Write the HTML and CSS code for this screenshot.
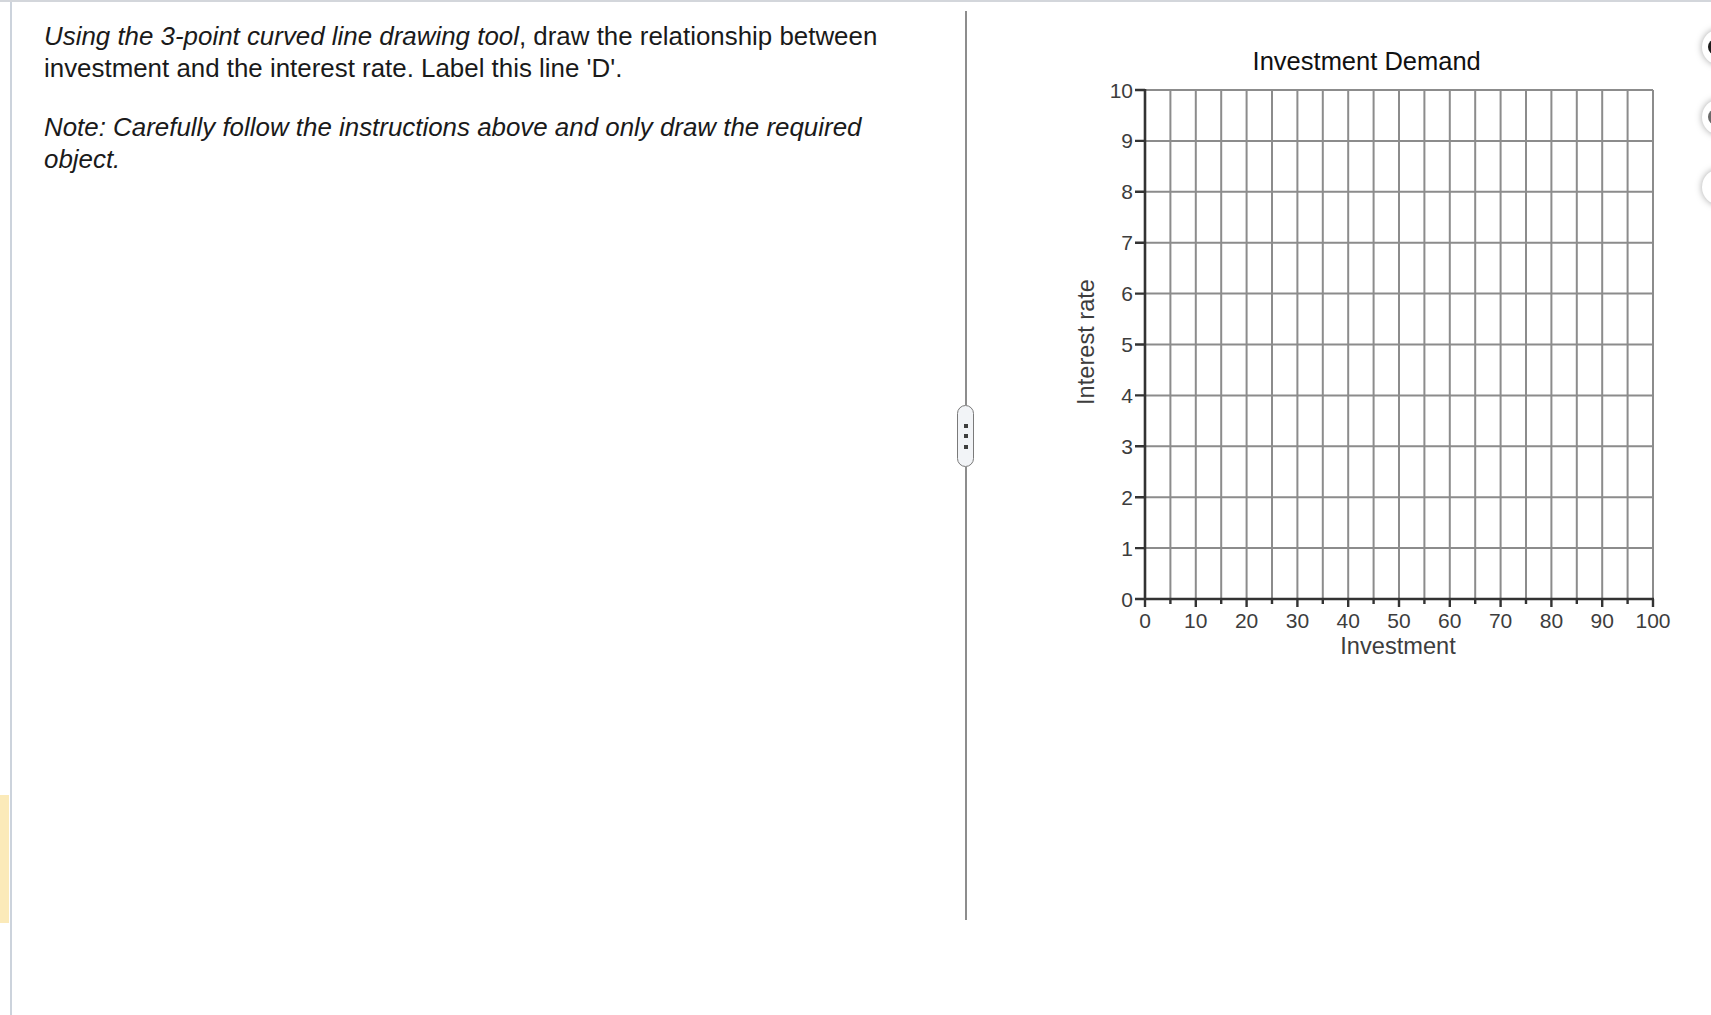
FILE: index.html
```html
<!DOCTYPE html>
<html lang="en">
<head>
<meta charset="utf-8">
<title>Investment Demand</title>
<link rel="stylesheet" href="styles.css">
</head>
<body>
<div class="page">
  <div class="gutter"><div class="mark"></div></div>
  <div class="frame">
    <section class="question">
      <p><span class="line"><em>Using the 3-point curved line drawing tool</em>, draw the relationship between</span><br><span class="line">investment and the interest rate. Label this line 'D'.</span></p>
      <p><em>Note: Carefully follow the instructions above and only draw the required object.</em></p>
    </section>
    <div class="splitter">
      <div class="split-line top"></div>
      <div class="handle"><span class="dot"></span><span class="dot"></span><span class="dot"></span></div>
      <div class="split-line bottom"></div>
    </div>
    <section class="graph">
      <svg class="chart" width="737" height="700" viewBox="974 2 737 700" xmlns="http://www.w3.org/2000/svg">
        <text class="title" x="1366.7" y="69.5" text-anchor="middle">Investment Demand</text>
        <path class="grid" d="M1170.4 90V599M1195.8 90V599M1221.2 90V599M1246.6 90V599M1272 90V599M1297.4 90V599M1322.8 90V599M1348.2 90V599M1373.6 90V599M1399 90V599M1424.4 90V599M1449.8 90V599M1475.2 90V599M1500.6 90V599M1526 90V599M1551.4 90V599M1576.8 90V599M1602.2 90V599M1627.6 90V599M1653 90V599M1145 90H1653M1145 140.9H1653M1145 191.8H1653M1145 242.7H1653M1145 293.6H1653M1145 344.5H1653M1145 395.4H1653M1145 446.3H1653M1145 497.2H1653M1145 548.1H1653"/>
        <path class="axis" d="M1145 89V600M1144 599H1654"/>
        <path class="tick" d="M1135 90H1145M1135 140.9H1145M1135 191.8H1145M1135 242.7H1145M1135 293.6H1145M1135 344.5H1145M1135 395.4H1145M1135 446.3H1145M1135 497.2H1145M1135 548.1H1145M1135 599H1145M1145 599V607M1195.8 599V607M1246.6 599V607M1297.4 599V607M1348.2 599V607M1399 599V607M1449.8 599V607M1500.6 599V607M1551.4 599V607M1602.2 599V607M1653 599V607M1170.4 599V604M1221.2 599V604M1272 599V604M1322.8 599V604M1373.6 599V604M1424.4 599V604M1475.2 599V604M1526 599V604M1576.8 599V604M1627.6 599V604"/>
        <g class="ylabels" text-anchor="end">
          <text x="1133" y="97.5">10</text>
          <text x="1133" y="148.4">9</text>
          <text x="1133" y="199.3">8</text>
          <text x="1133" y="250.2">7</text>
          <text x="1133" y="301.1">6</text>
          <text x="1133" y="352">5</text>
          <text x="1133" y="402.9">4</text>
          <text x="1133" y="453.8">3</text>
          <text x="1133" y="504.7">2</text>
          <text x="1133" y="555.6">1</text>
          <text x="1133" y="606.5">0</text>
        </g>
        <g class="xlabels" text-anchor="middle">
          <text x="1145" y="627.5">0</text>
          <text x="1195.8" y="627.5">10</text>
          <text x="1246.6" y="627.5">20</text>
          <text x="1297.4" y="627.5">30</text>
          <text x="1348.2" y="627.5">40</text>
          <text x="1399" y="627.5">50</text>
          <text x="1449.8" y="627.5">60</text>
          <text x="1500.6" y="627.5">70</text>
          <text x="1551.4" y="627.5">80</text>
          <text x="1602.2" y="627.5">90</text>
          <text x="1653" y="627.5">100</text>
        </g>
        <text class="axis-label" x="1398" y="654" text-anchor="middle">Investment</text>
        <text class="axis-label" x="1094" y="342" text-anchor="middle" transform="rotate(-90 1094 342)">Interest rate</text>
      </svg>
    </section>
  </div>
  <div class="tools">
    <div class="tool"><span class="glyph dark"></span></div>
    <div class="tool"><span class="glyph gray"></span></div>
    <div class="tool"></div>
  </div>
</div>
</body>
</html>
```

FILE: styles.css
```css
html, body {
  margin: 0;
  padding: 0;
  background: #ffffff;
}

body {
  font-family: "Liberation Sans", Arial, sans-serif;
  color: #1a1a1a;
  overflow: hidden;
}

.page {
  position: relative;
  display: flex;
  width: 1711px;
  height: 1013px;
  border-top: 2px solid #d3d6db;
}

.gutter {
  flex: none;
  width: 10px;
}

.mark {
  margin-top: 793px;
  width: 9px;
  height: 128px;
  background: #fbeab9;
}

.frame {
  flex: 1;
  display: flex;
  border-left: 2px solid #ccd3dc;
}

.question {
  flex: none;
  width: 945px;
  box-sizing: border-box;
  padding: 18px 34px 0 32px;
}

.question p {
  margin: 0 0 27px;
  font-size: 25.9px;
  line-height: 32px;
  color: #1a1a1a;
}

.question .line {
  white-space: nowrap;
}

.question em {
  font-style: italic;
}

.splitter {
  flex: none;
  width: 17px;
  display: flex;
  flex-direction: column;
  align-items: center;
  padding-top: 9px;
}

.split-line {
  width: 2px;
  margin-left: 1px;
  background: #8d8d8d;
}

.split-line.top {
  height: 394px;
}

.split-line.bottom {
  height: 453px;
}

.handle {
  box-sizing: border-box;
  width: 17px;
  height: 62px;
  border: 1.5px solid #7a7a7a;
  border-radius: 9px;
  background: #f2f4f7;
  display: flex;
  flex-direction: column;
  align-items: center;
  justify-content: center;
  gap: 6.5px;
}

.dot {
  display: block;
  width: 4px;
  height: 4px;
  background: #3e3e3e;
}

.graph {
  flex: 1;
}

.chart {
  display: block;
  overflow: visible;
}

.chart text {
  font-family: "Liberation Sans", Arial, sans-serif;
}

.title {
  font-size: 25.5px;
  fill: #111111;
}

.grid {
  fill: none;
  stroke: #8c8c8c;
  stroke-width: 2;
}

.axis {
  fill: none;
  stroke: #333333;
  stroke-width: 2.6;
}

.tick {
  fill: none;
  stroke: #333333;
  stroke-width: 2.4;
}

.ylabels text,
.xlabels text {
  font-size: 21px;
  fill: #3d3d3d;
}

.axis-label {
  font-size: 23.6px;
  fill: #3d3d3d;
}

.tools {
  position: absolute;
  left: 1702px;
  top: 27px;
  display: flex;
  flex-direction: column;
  gap: 34px;
}

.tool {
  position: relative;
  width: 36px;
  height: 36px;
  border-radius: 50%;
  background: #ffffff;
  box-shadow: 0 0 7px rgba(0, 0, 0, 0.35);
  overflow: hidden;
}

.glyph {
  position: absolute;
  left: 6px;
  top: 10px;
  width: 16px;
  height: 16px;
  border-radius: 50%;
}

.glyph.dark {
  background: #1c1c1c;
}

.glyph.gray {
  background: #6a6a6a;
}
```
